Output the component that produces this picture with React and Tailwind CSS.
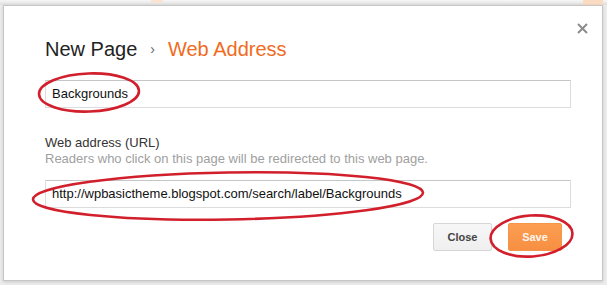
import React from "react";

const Ellipses = () => (
  <svg
    className="absolute inset-0 pointer-events-none"
    width="607"
    height="285"
    viewBox="0 0 607 285"
  >
    {/* hand drawn red circles from the screenshot */}
    <ellipse cx="89" cy="92.5" rx="50" ry="19" fill="none" stroke="#d21f2c" strokeWidth="2.6" transform="rotate(-2 89 92.5)" />
    <ellipse cx="228" cy="196" rx="195" ry="23.5" fill="none" stroke="#d21f2c" strokeWidth="2.6" transform="rotate(-1 228 196)" />
    <ellipse cx="531.5" cy="236" rx="41" ry="20.5" fill="none" stroke="#d21f2c" strokeWidth="2.6" transform="rotate(-4 531.5 236)" />
  </svg>
);

const App = () => {
  return (
    <div
      className="relative w-[607px] h-[285px] overflow-hidden bg-[#ececec] flex flex-col"
      style={{ fontFamily: '"Liberation Sans", Arial, sans-serif' }}
    >
      <div className="h-[5px] shrink-0 bg-gradient-to-b from-[#f7f7f7] to-[#dedede] flex">
        <div className="ml-[151px] w-[12px] h-[3px] rounded-b bg-[#fbe3cf]"></div>
        <div className="ml-auto mr-[4px] w-[20px] h-[5px] bg-[#f9dcc2]"></div>
      </div>

      <div className="relative ml-[3px] w-[600px] h-[276px] shrink-0 border border-[#c6c6c6] bg-white shadow-[0_1px_3px_rgba(0,0,0,0.15)]">
        <button className="absolute top-[16px] right-[14px] w-[12px] h-[12px] flex items-center justify-center">
          <svg width="11" height="11" viewBox="0 0 11 11">
            <path d="M1 1 L10 10 M10 1 L1 10" stroke="#8c8c8c" strokeWidth="2" />
          </svg>
        </button>

        <div className="pl-[41px] pr-[31px] pt-[31px]">
          <h2 className="h-[24px] leading-[24px] text-[20px] text-[#222] flex items-center">
            <span>New Page</span>
            <span className="mx-[13px] text-[14px] text-[#666]">›</span>
            <span className="text-[#f06b1e]">Web Address</span>
          </h2>

          <div className="mt-[19px] h-[28px] border border-[#dcdcdc] border-t-[#c6c6c6] pl-[6px] flex items-center text-[13px] text-[#111]">
            Backgrounds
          </div>

          <div className="mt-[27px] text-[13px] leading-[16px]">
            <div className="text-[#333]">Web address (URL)</div>
            <div className="text-[#a0a0a0]">Readers who click on this page will be redirected to this web page.</div>
          </div>

          <div className="mt-[13px] h-[28px] border border-[#dcdcdc] border-t-[#c6c6c6] pl-[6px] flex items-center text-[13px] text-[#111]">
            http://wpbasictheme.blogspot.com/search/label/Backgrounds
          </div>

          <div className="mt-[15px] mr-[9px] flex justify-end gap-[16px]">
            <button className="w-[59px] h-[28px] rounded-[2px] border border-[#d6d6d6] bg-gradient-to-b from-[#f7f7f7] to-[#efefef] text-[11px] font-bold text-[#444]">
              Close
            </button>
            <button className="w-[54px] h-[28px] rounded-[2px] border border-[#f5954a] bg-gradient-to-b from-[#fc9e52] to-[#f78f42] text-[11px] font-bold text-[#fff6ee]">
              Save
            </button>
          </div>
        </div>
      </div>

      <Ellipses />
    </div>
  );
};

export default App;
